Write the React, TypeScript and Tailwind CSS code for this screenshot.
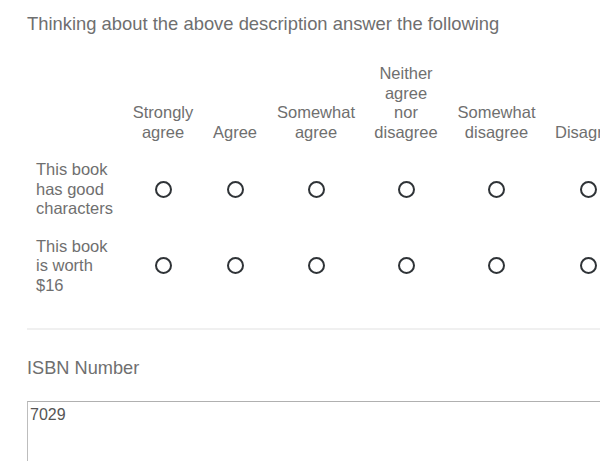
import React from "react";

const cols = [
  ["Strongly", "agree"],
  ["Agree"],
  ["Somewhat", "agree"],
  ["Neither", "agree", "nor", "disagree"],
  ["Somewhat", "disagree"],
  ["Disagree"],
];

const rows = [
  ["This book", "has good", "characters"],
  ["This book", "is worth", "$16"],
];

function Radio() {
  return <span className="block w-[17px] h-[17px] rounded-full border-2 border-[#2f3337] bg-white" />;
}

export default function App() {
  return (
    <div
      className="w-[600px] h-[461px] overflow-hidden bg-white text-[#6f6f6f]"
      style={{ fontFamily: '"Liberation Sans", Arial, sans-serif' }}
    >
      <div className="pl-[27px] pt-[11px]">
        <div className="text-[18.4px] leading-[26px]">Thinking about the above description answer the following</div>

        <div className="mt-[27px] pl-[9px] w-[800px] grid grid-cols-[88px_78px_66px_96px_84px_97px_86px] text-[16.5px] leading-[19.5px]">
          <div className="pb-[9px]" />
          {cols.map((c, i) => (
            <div key={i} className="pb-[9px] flex flex-col justify-end items-center text-center whitespace-nowrap">
              {c.map((l, j) => (
                <div key={j}>{l}</div>
              ))}
            </div>
          ))}
          {rows.map((r, ri) => (
            <React.Fragment key={ri}>
              <div className="py-[9px] whitespace-nowrap">
                {r.map((l, j) => (
                  <div key={j}>{l}</div>
                ))}
              </div>
              {cols.map((_, ci) => (
                <div key={ci} className="py-[9px] flex items-center justify-center">
                  <Radio />
                </div>
              ))}
            </React.Fragment>
          ))}
        </div>

        <div className="mt-[24px] h-[2px] bg-[#f0f0f0]" />

        <div className="mt-[25px] text-[18.2px] leading-[26px]">ISBN Number</div>

        <div className="mt-[20px] w-[620px] h-[90px] border border-[#c8c8c8] border-t-[#b0b0b0] border-l-[#bdbdbd] px-[2px] pt-[3px] text-[16px] leading-[20px] text-[#555]">
          7029
        </div>
      </div>
    </div>
  );
}
